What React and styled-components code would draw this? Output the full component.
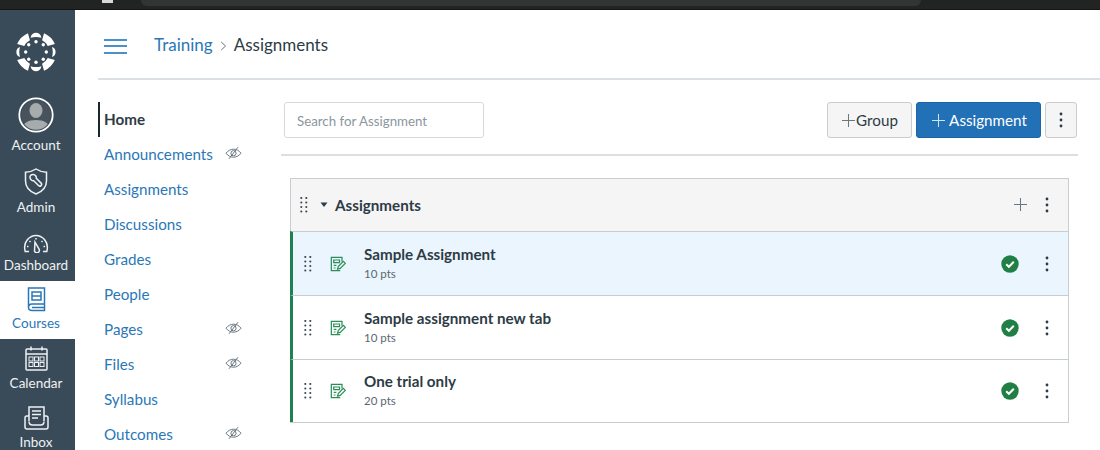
import React from "react";
import styled, { createGlobalStyle } from "styled-components";

const Global = createGlobalStyle`
  html, body { margin: 0; padding: 0; height: 450px; overflow: hidden; background: #fff; }
  body { font-family: Lato, "Open Sans", sans-serif; color: #2d3b45; }
  * { box-sizing: border-box; }
`;

const Page = styled.div`display: flex; flex-direction: column; width: 1100px; height: 450px; overflow: hidden;`;
const BrowserStrip = styled.div`height: 10px; flex: none; background: #222323; display: flex; padding-left: 102px; gap: 20px; overflow: hidden; border-bottom: 1px solid #161616;`;
const TabMark = styled.div`width: 11px; height: 3px; background: #d8d8d8;`;
const UrlPill = styled.div`width: 780px; height: 6px; background: #333534; border-radius: 0 0 12px 12px; margin-left: 8px;`;
const Body = styled.div`display: flex; flex: 1; min-height: 0;`;

const Sidebar = styled.nav`width: 75px; flex: none; background: #394b58; display: flex; flex-direction: column; overflow: hidden;`;
const LogoBlock = styled.div`height: 83px; flex: none; display: flex; justify-content: center; padding: 21px 3px 0 0;`;
const NavItem = styled.div`
  height: ${p => p.$h}px; flex: none; display: flex; flex-direction: column; align-items: center; justify-content: flex-end;
  padding: 0 3px ${p => p.$pb}px 0; gap: ${p => p.$gap ?? 4}px;
  background: ${p => (p.$active ? "#fff" : "transparent")};
  color: ${p => (p.$active ? "#2a77b8" : "#eef1f3")};
`;
const NavLabel = styled.span`font-size: 13.5px; line-height: 16px; white-space: nowrap;`;

const Content = styled.div`flex: 1; min-width: 0; display: flex; flex-direction: column; padding-left: 23px;`;
const Header = styled.header`height: 70px; flex: none; display: flex; align-items: center; border-bottom: 2px solid #dbe0e4; padding: 2px 0 0 6px; margin-bottom: 20px;`;
const Burger = styled.div`width: 23px; height: 15px; margin: 2px 27px 0 0; border-top: 2px solid #4a90c9; border-bottom: 2px solid #4a90c9; display: flex; align-items: center;`;
const BurgerMid = styled.div`width: 100%; height: 2px; background: #4a90c9;`;
const Crumb = styled.span`font-size: 17px; line-height: 24px; color: ${p => (p.$link ? "#2a77b8" : "#2d3b45")};`;
const CrumbSep = styled.span`margin: 2px 7px 0 7px; display: flex;`;

const Columns = styled.div`display: flex; flex: 1; min-height: 0;`;
const CourseNav = styled.ul`width: 183px; flex: none; margin: 0; padding: 2px 0 0; list-style: none;`;
const CourseLink = styled.li`
  height: 35px; display: flex; align-items: center; justify-content: space-between; padding: 0 39px 2px ${p => (p.$active ? 4 : 6)}px;
  font-size: 15.2px; line-height: 20px;
  border-left: ${p => (p.$active ? "2px solid #1c2830" : "none")};
  font-weight: ${p => (p.$active ? 700 : 400)};
  color: ${p => (p.$active ? "#2d3b45" : "#2a77b8")};
`;
const EyeWrap = styled.span`display: flex; margin-top: -2px; color: #6a7780;`;

const Main = styled.main`width: 797px; flex: none;`;
const Toolbar = styled.div`display: flex; align-items: flex-start; height: 56px; padding: 2px 1px 0 3px; border-bottom: 2px solid #dcdfe1;`;
const Search = styled.div`width: 200px; height: 36px; border: 1px solid #d4d9dc; border-radius: 3px; padding: 0 12px; font-size: 13.3px; line-height: 36px; color: #8b969e; background: #fff;`;
const Spacer = styled.div`flex: 1;`;
const Btn = styled.div`
  height: 36px; width: ${p => p.$w}px; margin-left: ${p => p.$ml ?? 0}px; border-radius: 3px; display: flex; align-items: center; justify-content: center;
  font-size: 15.2px; gap: ${p => p.$gap ?? 0}px; padding-left: ${p => p.$pl ?? 0}px;
  background: ${p => (p.$primary ? "#2270b6" : "#f5f5f5")};
  color: ${p => (p.$primary ? "#fff" : "#2d3b45")};
  border: 1px solid ${p => (p.$primary ? "#1d65a5" : "#c7cdd1")};
`;

const Group = styled.section`margin: 22px 9px 0 9px; border: 1px solid #c7cdd1;`;
const GroupHead = styled.div`height: 52px; background: #f5f5f5; display: flex; align-items: center; padding: 0 19px 1px 9px;`;
const Caret = styled.span`display: flex; margin-left: 12px;`;
const GroupTitle = styled.span`font-size: 15.2px; font-weight: 700; color: #2d3b45; margin-left: 7px; flex: 1;`;
const HeadPlus = styled.span`display: flex; margin-right: 18px;`;
const Row = styled.div`
  height: ${p => p.$h}px; display: flex; align-items: center; padding: 0 19px 0 11px;
  border-top: 1px solid #c7cdd1; border-left: 3px solid #1f8050; margin-left: -1px;
  background: ${p => (p.$hi ? "#ebf5fd" : "#fff")};
`;
const RowIcon = styled.span`display: flex; margin: 0 18px;`;
const RowText = styled.div`flex: 1; display: flex; flex-direction: column; padding-bottom: 2px;`;
const RowTitle = styled.div`font-size: 15.2px; font-weight: 700; line-height: 20px; color: #2d3b45;`;
const RowMeta = styled.div`font-size: 11.5px; line-height: 16px; color: #5b6871; margin-top: 2px;`;
const Status = styled.span`display: flex; margin-right: 26px;`;

const Grip = () => (
  <svg width="8" height="16" viewBox="0 0 8 16" fill="#3b4650">
    {[1, 5.5, 10, 14.5].flatMap(y => [<circle key={"a" + y} cx="1.3" cy={y} r="1.05" />, <circle key={"b" + y} cx="6.3" cy={y} r="1.05" />])}
  </svg>
);
const Kebab = () => (
  <svg width="4" height="16" viewBox="0 0 4 16" fill="#2d3b45">
    <circle cx="2" cy="2" r="1.4" /><circle cx="2" cy="8" r="1.4" /><circle cx="2" cy="14" r="1.4" />
  </svg>
);
const Plus = ({ size = 14, color = "#6b7780" }) => (
  <svg width={size} height={size} viewBox="0 0 14 14" stroke={color} strokeWidth="1.1" fill="none">
    <path d="M7 0v14M0 7h14" />
  </svg>
);
const Eye = () => (
  <svg width="17" height="14" viewBox="0 0 17 14" fill="none" stroke="currentColor" strokeWidth="1">
    <path d="M1 7.2C3 4.6 5.6 3.2 8.5 3.2s5.5 1.4 7.5 4c-2 2.6-4.6 4-7.5 4S3 9.8 1 7.2Z" />
    <circle cx="8.5" cy="7.2" r="2.6" />
    <path d="M4 12.8 13 1.2" />
  </svg>
);
const AssignIcon = () => (
  <svg width="16" height="16" viewBox="0 0 18 18" fill="none" stroke="#2b8f5a" strokeWidth="1.4">
    <path d="M13.5 6.5V1.5H1.5v15h10" />
    <path d="M4.2 4.5h6.5v3H4.2ZM4.2 10.5h3M4.2 13.5h2" />
    <path d="M8.5 14.8l.8-3 5.7-5.7 2.2 2.2-5.7 5.7-3 .8Z" />
  </svg>
);
const Check = () => (
  <svg width="18" height="18" viewBox="0 0 18 18">
    <circle cx="9" cy="9" r="8.7" fill="#1f7f45" />
    <path d="M5.2 9.2 7.9 11.8 12.8 6.7" stroke="#fff" strokeWidth="2" fill="none" />
  </svg>
);
const Logo = () => (
  <svg width="42" height="42" viewBox="-21 -21 42 42" fill="#fff">
    {[45, 135, 225, 315].map(a => (
      <path key={a} transform={`rotate(${a})`} d="M-7.6 -19A20.5 20.5 0 0 1 7.6 -19L4 -12.6A13.2 13.2 0 0 0 -4 -12.6Z" />
    ))}
    {[0, 180].map(a => (
      <path key={"s" + a} transform={`rotate(${a})`} d="M-5.4 -14.2C-4.6 -20.8 4.6 -20.8 5.4 -14.2C2 -15.4 -2 -15.4 -5.4 -14.2Z" />
    ))}
    {[90, 270].map(a => (
      <path key={"s" + a} transform={`rotate(${a})`} d="M-5 -16C-4 -20.8 4 -20.8 5 -16C2 -17 -2 -17 -5 -16Z" />
    ))}
    {[0, 45, 90, 135, 180, 225, 270, 315].map(a => (
      <circle key={"d" + a} cx={10.3 * Math.sin((a * Math.PI) / 180)} cy={-10.3 * Math.cos((a * Math.PI) / 180)} r="1.7" />
    ))}
  </svg>
);
const Avatar = () => (
  <svg width="36" height="36" viewBox="0 0 36 36">
    <circle cx="18" cy="18" r="16.7" fill="#394b58" stroke="#fff" strokeWidth="1.8" />
    <clipPath id="av"><circle cx="18" cy="18" r="14.8" /></clipPath>
    <g clipPath="url(#av)" fill="#a6abae">
      <circle cx="18" cy="18" r="15" fill="#47535c" />
      <ellipse cx="18" cy="13.5" ry="7.5" rx="6.5" />
      <path d="M3 36c0-9 6-13 15-13s15 4 15 13Z" />
    </g>
  </svg>
);
const ic = { fill: "none", stroke: "currentColor", strokeWidth: 1.5 };
const AdminIcon = () => (
  <svg width="24" height="27" viewBox="0 0 24 27" {...ic}>
    <path d="M12 1c3 2 6.5 3 10.5 3.2V13c0 6-4 10.5-10.5 13C5.5 23.5 1.5 19 1.5 13V4.2C5.5 4 9 3 12 1Z" />
    <path d="M6.5 7.5c1.5-1.5 3.9-1.3 5.2.3.6.8.8 1.7.6 2.5l4.6 4.6c.9.9.9 2 .2 2.7s-1.8.7-2.6-.1l-4.8-4.7c-.9.1-1.7-.2-2.4-.8-1.4-1.2-1.8-3.4-.8-4.5Z" />
  </svg>
);
const DashIcon = () => (
  <svg width="26" height="19" viewBox="0 0 26 19" {...ic}>
    <path d="M6 17.5H2.2C1 13 1.5 9 4.5 5.5 7 2.8 10 1.5 13 1.5s6 1.3 8.5 4c3 3.5 3.5 7.5 2.3 12H20" />
    <path d="M12 8l4.3 7.6a2.5 2.5 0 0 1-4.8 1.4Z" />
    <path d="M13 4v1.5M6.5 7l1 1M19.5 7l-1 1M4 12.5h1.5M22 12.5h-1.5" />
  </svg>
);
const BookIcon = () => (
  <svg width="19" height="25" viewBox="0 0 19 25" {...ic}>
    <path d="M1.5 20.5V1h16v16H5c-2 0-3.5 1.5-3.5 3.5s1.5 3 3.5 3h12.5V17" />
    <rect x="5" y="5" width="9" height="8" />
    <path d="M5 9h9M5 20.5h12.5" />
  </svg>
);
const CalIcon = () => (
  <svg width="23" height="25" viewBox="0 0 23 25" {...ic}>
    <rect x="1" y="3" width="21" height="21" rx="1" />
    <path d="M1 8h21M6 .5v4M17 .5v4" />
    <g strokeWidth="1">
      {[11, 16.5].flatMap(y => [4, 9.5, 15].map(x => <rect key={x + "-" + y} x={x} y={y} width="4" height="4" />))}
    </g>
  </svg>
);
const InboxIcon = () => (
  <svg width="25" height="24" viewBox="0 0 25 24" {...ic}>
    <path d="M5 15V1h15v14" />
    <path d="M8 5h9M8 8.5h9M8 12h6" />
    <path d="M5 10H2.8C1.8 10 1 10.8 1 11.8V21c0 1.100.9 2 2 2h19c1.100 0 2-.9 2-2v-9.200c0-1-.8-1.800-1.800-1.800H20" />
    <path d="M5 15.500c0 2 1.500 3.500 3.500 3.500h8c2 0 3.500-1.500 3.500-3.500" />
  </svg>
);
const Chevron = () => (
  <svg width="7" height="10" viewBox="0 0 7 10" fill="none" stroke="#6b7780" strokeWidth="1">
    <path d="M1.2 1 5.6 5 1.2 9" />
  </svg>
);
const CaretIcon = () => (
  <svg width="8" height="6" viewBox="0 0 8 6" fill="#2d3b45"><path d="M.5.5h7L4 5Z" /></svg>
);

const links = [
  { t: "Announcements", eye: true }, { t: "Assignments" }, { t: "Discussions" }, { t: "Grades" }, { t: "People" },
  { t: "Pages", eye: true }, { t: "Files", eye: true }, { t: "Syllabus" }, { t: "Outcomes", eye: true },
];
const rows = [
  { t: "Sample Assignment", p: "10 pts", hi: true, h: 64 },
  { t: "Sample assignment new tab", p: "10 pts", h: 64 },
  { t: "One trial only", p: "20 pts", h: 63 },
];

export default function App() {
  return (
    <Page>
      <Global />
      <BrowserStrip><TabMark /><UrlPill /></BrowserStrip>
      <Body>
        <Sidebar>
          <LogoBlock><Logo /></LogoBlock>
          <NavItem $h={63} $pb={3} $gap={4}><Avatar /><NavLabel>Account</NavLabel></NavItem>
          <NavItem $h={63} $pb={4}><AdminIcon /><NavLabel>Admin</NavLabel></NavItem>
          <NavItem $h={62} $pb={8} $gap={4}><DashIcon /><NavLabel>Dashboard</NavLabel></NavItem>
          <NavItem $h={58} $pb={8} $gap={3} $active><BookIcon /><NavLabel>Courses</NavLabel></NavItem>
          <NavItem $h={58} $pb={6} $gap={4}><CalIcon /><NavLabel>Calendar</NavLabel></NavItem>
          <NavItem $h={53} $pb={0} $gap={4}><InboxIcon /><NavLabel>Inbox</NavLabel></NavItem>
        </Sidebar>
        <Content>
          <Header>
            <Burger><BurgerMid /></Burger>
            <Crumb $link>Training</Crumb>
            <CrumbSep><Chevron /></CrumbSep>
            <Crumb>Assignments</Crumb>
          </Header>
          <Columns>
            <CourseNav>
              <CourseLink $active>Home</CourseLink>
              {links.map(l => (
                <CourseLink key={l.t}>
                  {l.t}
                  {l.eye && <EyeWrap><Eye /></EyeWrap>}
                </CourseLink>
              ))}
            </CourseNav>
            <Main>
              <Toolbar>
                <Search>Search for Assignment</Search>
                <Spacer />
                <Btn $w={85} $gap={1} $pl={1}><Plus size={13} />Group</Btn>
                <Btn $w={125} $ml={4} $primary $gap={4} $pl={2}><Plus size={13} color="#cfe3f4" />Assignment</Btn>
                <Btn $w={32} $ml={4}><Kebab /></Btn>
              </Toolbar>
              <Group>
                <GroupHead>
                  <Grip />
                  <Caret><CaretIcon /></Caret>
                  <GroupTitle>Assignments</GroupTitle>
                  <HeadPlus><Plus size={13} /></HeadPlus>
                  <Kebab />
                </GroupHead>
                {rows.map(r => (
                  <Row key={r.t} $hi={r.hi} $h={r.h}>
                    <Grip />
                    <RowIcon><AssignIcon /></RowIcon>
                    <RowText>
                      <RowTitle>{r.t}</RowTitle>
                      <RowMeta>{r.p}</RowMeta>
                    </RowText>
                    <Status><Check /></Status>
                    <Kebab />
                  </Row>
                ))}
              </Group>
            </Main>
          </Columns>
        </Content>
      </Body>
    </Page>
  );
}
